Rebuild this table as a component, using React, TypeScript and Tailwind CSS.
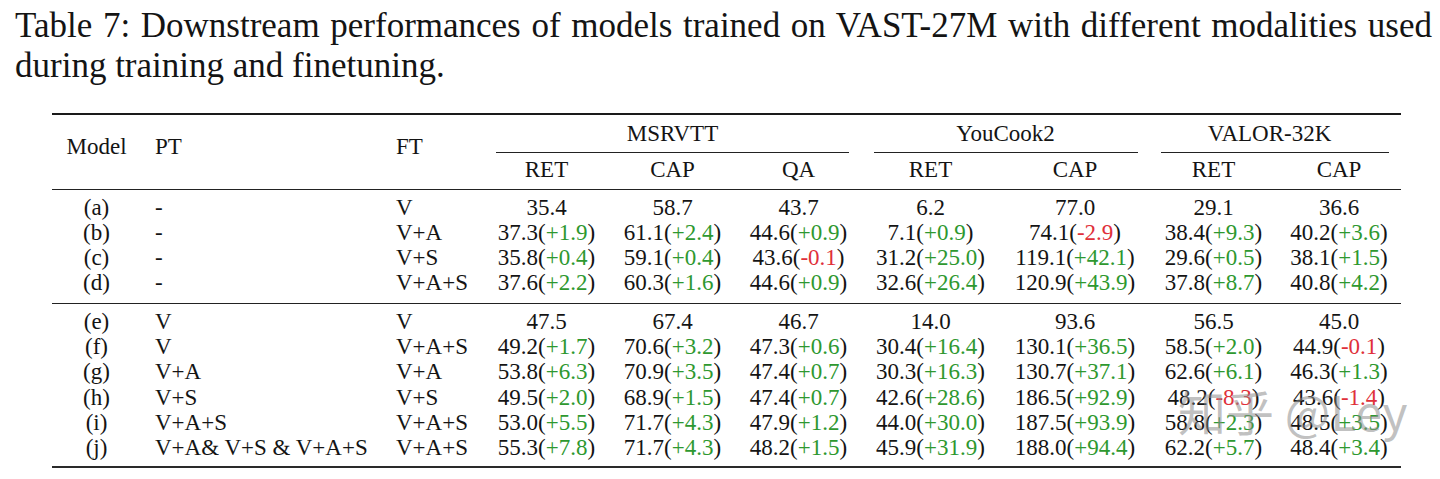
import React from "react";

type Cell = string;

const groupA: Cell[][] = [
  ["(a)", "-", "V", "35.4", "58.7", "43.7", "6.2", "77.0", "29.1", "36.6"],
  ["(b)", "-", "V+A", "37.3(+1.9)", "61.1(+2.4)", "44.6(+0.9)", "7.1(+0.9)", "74.1(-2.9)", "38.4(+9.3)", "40.2(+3.6)"],
  ["(c)", "-", "V+S", "35.8(+0.4)", "59.1(+0.4)", "43.6(-0.1)", "31.2(+25.0)", "119.1(+42.1)", "29.6(+0.5)", "38.1(+1.5)"],
  ["(d)", "-", "V+A+S", "37.6(+2.2)", "60.3(+1.6)", "44.6(+0.9)", "32.6(+26.4)", "120.9(+43.9)", "37.8(+8.7)", "40.8(+4.2)"],
];

const groupB: Cell[][] = [
  ["(e)", "V", "V", "47.5", "67.4", "46.7", "14.0", "93.6", "56.5", "45.0"],
  ["(f)", "V", "V+A+S", "49.2(+1.7)", "70.6(+3.2)", "47.3(+0.6)", "30.4(+16.4)", "130.1(+36.5)", "58.5(+2.0)", "44.9(-0.1)"],
  ["(g)", "V+A", "V+A", "53.8(+6.3)", "70.9(+3.5)", "47.4(+0.7)", "30.3(+16.3)", "130.7(+37.1)", "62.6(+6.1)", "46.3(+1.3)"],
  ["(h)", "V+S", "V+S", "49.5(+2.0)", "68.9(+1.5)", "47.4(+0.7)", "42.6(+28.6)", "186.5(+92.9)", "48.2(-8.3)", "43.6(-1.4)"],
  ["(i)", "V+A+S", "V+A+S", "53.0(+5.5)", "71.7(+4.3)", "47.9(+1.2)", "44.0(+30.0)", "187.5(+93.9)", "58.8(+2.3)", "48.5(+3.5)"],
  ["(j)", "V+A& V+S & V+A+S", "V+A+S", "55.3(+7.8)", "71.7(+4.3)", "48.2(+1.5)", "45.9(+31.9)", "188.0(+94.4)", "62.2(+5.7)", "48.4(+3.4)"],
];

function Value({ v }: { v: string }) {
  const m = v.match(/^([^()]+)\(([+-][^)]+)\)$/);
  if (!m) return <>{v}</>;
  const neg = m[2].startsWith("-");
  return (
    <>
      {m[1]}(
      <span className={neg ? "text-[#e0303a]" : "text-[#2e982f]"}>{m[2]}</span>)
    </>
  );
}

function Row({ r }: { r: Cell[] }) {
  return (
    <>
      <div className="text-center leading-[25.2px]">{r[0]}</div>
      <div className="pl-[14px] leading-[25.2px] whitespace-nowrap">{r[1]}</div>
      <div className="pl-[14px] leading-[25.2px] whitespace-nowrap">{r[2]}</div>
      {r.slice(3).map((v, i) => (
        <div key={i} className="text-center leading-[25.2px] whitespace-nowrap">
          <Value v={v} />
        </div>
      ))}
    </>
  );
}

export default function App() {
  return (
    <div className="relative w-[1440px] h-[479px] overflow-hidden bg-white text-[#141414] font-['Liberation_Serif','Times_New_Roman',serif]">
      <p className="ml-[15px] w-[1417px] pt-[6px] text-[35px] leading-[40px] text-justify">
        Table 7: Downstream performances of models trained on VAST-27M with different modalities used during training and finetuning.
      </p>

      <div className="ml-[52px] mt-[27px] w-[1349px] grid grid-cols-[89px_241px_102px_125px_127px_125px_139px_150px_127px_124px] text-[23px]">
        <div className="col-span-10 h-[2px] bg-[#1a1a1a]" />

        <div className="row-span-2 text-center pt-[18.6px] leading-[25.2px]">Model</div>
        <div className="row-span-2 pl-[14px] pt-[18.6px] leading-[25.2px]">PT</div>
        <div className="row-span-2 pl-[14px] pt-[18.6px] leading-[25.2px]">FT</div>
        <div className="col-span-3 flex flex-col">
          <div className="text-center pt-[5.6px] pb-[6.2px] leading-[25.2px]">MSRVTT</div>
          <div className="h-px mx-[12px] bg-[#222]" />
        </div>
        <div className="col-span-2 flex flex-col">
          <div className="text-center pt-[5.6px] pb-[6.2px] leading-[25.2px]">YouCook2</div>
          <div className="h-px ml-[13px] mr-[12px] bg-[#222]" />
        </div>
        <div className="col-span-2 flex flex-col">
          <div className="text-center pr-[12px] pt-[5.6px] pb-[6.2px] leading-[25.2px]">VALOR-32K</div>
          <div className="h-px ml-[11px] mr-[12px] bg-[#222]" />
        </div>

        {["RET", "CAP", "QA", "RET", "CAP", "RET", "CAP"].map((h, i) => (
          <div key={i} className="text-center pt-[3.6px] pb-[7.2px] leading-[25.2px]">
            {h}
          </div>
        ))}

        <div className="col-span-10 h-px bg-[#222]" />
        <div className="col-span-10 h-[4.6px]" />
        {groupA.map((r, i) => (
          <Row key={i} r={r} />
        ))}
        <div className="col-span-10 h-[7.6px]" />
        <div className="col-span-10 h-px bg-[#222]" />
        <div className="col-span-10 h-[5px]" />
        {groupB.map((r, i) => (
          <Row key={i} r={r} />
        ))}
        <div className="col-span-10 h-[6.3px]" />
        <div className="col-span-10 h-[2px] bg-[#2a2a2a]" />
      </div>

      <div className="absolute left-[1178px] top-[386px] text-[48px] leading-none whitespace-nowrap text-[rgba(140,140,140,0.55)] font-['Noto_Sans_CJK_SC','Noto_Sans',sans-serif]">
        知乎 @Ley
      </div>
    </div>
  );
}
